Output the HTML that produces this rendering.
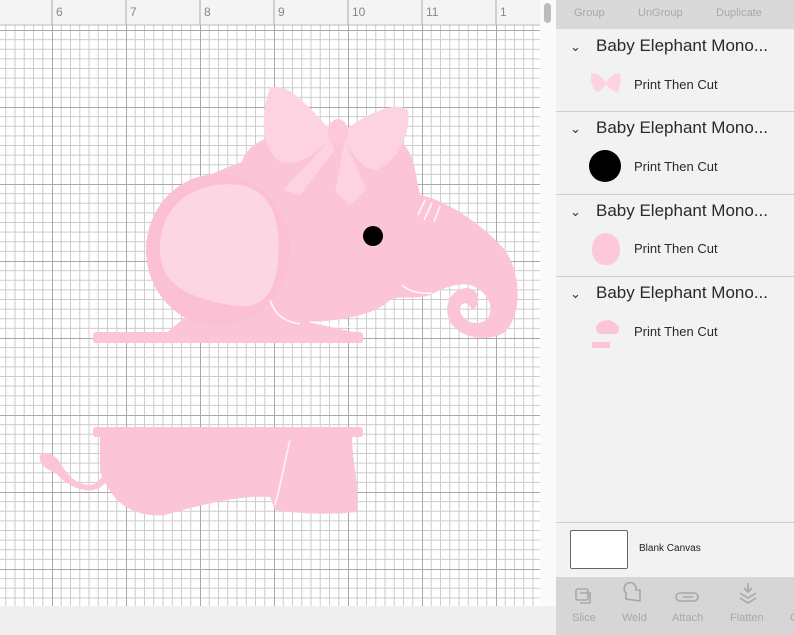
<!DOCTYPE html>
<html><head><meta charset="utf-8"><style>
*{margin:0;padding:0;box-sizing:border-box}
body{width:794px;height:635px;overflow:hidden;background:#f2f2f2;font-family:"Liberation Sans",sans-serif;position:relative}
.abs{position:absolute}
.hdr{position:absolute;left:570px;font-size:17px;color:#2a2a2a;width:224px;white-space:nowrap}
.hdr span{display:inline-block;width:26px;font-size:13px;color:#333}
.ptc{position:absolute;left:634px;font-size:13px;color:#2a2a2a}
.sep{position:absolute;left:556px;width:238px;height:1px;background:#cfcfcf}
.tb{position:absolute;font-size:11px;color:#a8a8a8}
</style></head><body>
<svg class="abs" style="left:0;top:0" width="556" height="635">
<defs>
<pattern id="g" patternUnits="userSpaceOnUse" x="52" y="30" width="74" height="77">
<rect width="74" height="77" fill="#fff"/>
<g stroke="#cdcdcd" stroke-width="1">
<line x1="9.25" y1="0" x2="9.25" y2="77"/><line x1="18.5" y1="0" x2="18.5" y2="77"/><line x1="27.75" y1="0" x2="27.75" y2="77"/><line x1="37" y1="0" x2="37" y2="77"/><line x1="46.25" y1="0" x2="46.25" y2="77"/><line x1="55.5" y1="0" x2="55.5" y2="77"/><line x1="64.75" y1="0" x2="64.75" y2="77"/>
<line y1="9.6" x1="0" y2="9.6" x2="74"/><line y1="19.25" x1="0" y2="19.25" x2="74"/><line y1="28.9" x1="0" y2="28.9" x2="74"/><line y1="38.5" x1="0" y2="38.5" x2="74"/><line y1="48.1" x1="0" y2="48.1" x2="74"/><line y1="57.75" x1="0" y2="57.75" x2="74"/><line y1="67.4" x1="0" y2="67.4" x2="74"/>
</g>
<g stroke="#a9a9a9" stroke-width="1"><line x1="0.5" y1="0" x2="0.5" y2="77"/><line y1="0.5" x1="0" y2="0.5" x2="74"/></g>
</pattern>
</defs>
<rect x="0" y="0" width="540" height="606" fill="url(#g)"/>
<rect x="0" y="606" width="556" height="29" fill="#efefef"/>
<rect x="0" y="0" width="540" height="25" fill="#f4f4f4"/>
<line x1="0" y1="25" x2="540" y2="25" stroke="#bbb"/>
<g stroke="#aaa">
<line x1="52" y1="0" x2="52" y2="25"/><line x1="126" y1="0" x2="126" y2="25"/><line x1="200" y1="0" x2="200" y2="25"/><line x1="274" y1="0" x2="274" y2="25"/><line x1="348" y1="0" x2="348" y2="25"/><line x1="422" y1="0" x2="422" y2="25"/><line x1="496" y1="0" x2="496" y2="25"/>
</g>
<g fill="#888" font-size="12" font-family="Liberation Sans"><text x="56" y="16">6</text><text x="130" y="16">7</text><text x="204" y="16">8</text><text x="278" y="16">9</text><text x="352" y="16">10</text><text x="426" y="16">11</text><text x="500" y="16">1</text></g>
<rect x="540" y="0" width="16" height="606" fill="#fafafa"/>
<rect x="544" y="3" width="7" height="20" rx="3.5" fill="#bcbcbc"/>
<g fill="#fcc5d7">
<rect x="93" y="332" width="270" height="11" rx="3"/>
<path d="M165 334 L200 305 L290 305 L300 320 L362 334 Z"/>
<path d="M242 162 C248 135 300 125 350 128 C392 130 410 140 415 170 L420 195 C445 200 480 222 505 250 C522 275 522 315 505 332 C490 342 462 340 450 322 C442 305 452 287 468 288 C480 290 482 305 472 310 C468 300 460 302 460 310 C462 322 478 328 488 318 C495 305 486 290 470 285 C455 282 440 290 430 295 C415 300 400 295 390 300 C375 315 340 322 300 322 L230 318 C200 315 160 300 150 270 C145 240 160 200 200 180 C215 172 230 166 242 162 Z"/>
</g>
<ellipse cx="218" cy="250" rx="72" ry="76" fill="#fbc0d4"/>
<path d="M160 250 C160 200 200 180 240 185 C270 190 282 220 278 260 C274 300 258 310 230 305 C190 298 160 285 160 250 Z" fill="#fdd6e3"/>
<g fill="none" stroke="#fff" stroke-width="1.6" opacity="0.85">
<path d="M270 300 C275 315 285 322 300 324"/><path d="M310 322 L355 328"/>
<path d="M402 285 C410 292 420 294 432 293"/>
<path d="M425 200 L418 215 M432 203 L424 220 M440 206 L434 222"/>
</g>
<g fill="#fdd3e1">
<path d="M332 132 C312 110 287 80 270 88 C262 110 258 145 280 162 C300 167 318 152 332 137 Z"/>
<path d="M345 130 C365 115 395 100 408 110 C412 135 395 165 375 170 C360 168 350 150 345 140 Z"/>
<path d="M330 140 L283 190 L300 195 L335 150 Z"/>
<path d="M345 140 L335 192 L350 205 L366 190 Z"/>
<ellipse cx="338" cy="132" rx="10" ry="13" fill="#fcc8da"/>
</g>
<circle cx="373" cy="236" r="10" fill="#000"/>
<g fill="#fcc5d7">
<rect x="93" y="427" width="270" height="10" rx="3"/>
<path d="M100 436 L352 436 C352 460 360 490 357 512 C330 515 300 514 275 510 L270 497 C240 495 200 505 165 515 C130 518 110 500 100 470 Z"/>
<path d="M40 455 C45 450 55 455 60 462 C65 472 75 485 90 485 C98 484 102 478 104 470 L108 476 C106 486 96 492 85 490 C70 488 60 478 55 472 C45 470 38 462 40 455 Z"/>
</g>
<path d="M290 440 C285 460 282 480 275 505" stroke="#fff" stroke-width="1.5" fill="none" opacity="0.8"/>
</svg>
<div class="abs" style="left:556px;top:0;width:238px;height:29px;background:#d9d9d9"></div>
<div class="tb" style="left:574px;top:7px">Group</div>
<div class="tb" style="left:638px;top:7px">UnGroup</div>
<div class="tb" style="left:716px;top:7px">Duplicate</div>
<div class="hdr" style="top:36px"><span>⌄</span>Baby Elephant Mono...</div>
<svg class="abs" style="left:590px;top:70px" width="32" height="28"><path d="M16 12 C10 4 4 2 1 4 C0 12 3 20 8 22 C12 20 15 16 16 14 C18 18 24 22 28 22 C31 16 31 6 30 4 C26 2 20 6 16 12 Z" fill="#fdd3e1"/></svg>
<div class="ptc" style="top:77px">Print Then Cut</div>
<div class="sep" style="top:111px"></div>
<div class="hdr" style="top:118px"><span>⌄</span>Baby Elephant Mono...</div>
<div class="abs" style="left:589px;top:150px;width:32px;height:32px;border-radius:50%;background:#000"></div>
<div class="ptc" style="top:159px">Print Then Cut</div>
<div class="sep" style="top:194px"></div>
<div class="hdr" style="top:201px"><span>⌄</span>Baby Elephant Mono...</div>
<div class="abs" style="left:592px;top:233px;width:28px;height:32px;border-radius:50% 50% 45% 45%;background:#fcc8da"></div>
<div class="ptc" style="top:241px">Print Then Cut</div>
<div class="sep" style="top:276px"></div>
<div class="hdr" style="top:283px"><span>⌄</span>Baby Elephant Mono...</div>
<svg class="abs" style="left:590px;top:318px" width="36" height="32"><path d="M8 6 C12 1 22 1 26 6 C30 8 30 14 26 16 L10 16 C5 14 5 9 8 6 Z M2 24 L20 24 L20 30 L2 30 Z" fill="#fcc5d7"/></svg>
<div class="ptc" style="top:324px">Print Then Cut</div>
<div class="sep" style="top:522px"></div>
<div class="abs" style="left:570px;top:530px;width:58px;height:39px;background:#fff;border:1px solid #666;border-radius:2px"></div>
<div class="abs" style="left:639px;top:543px;font-size:10px;color:#222">Blank Canvas</div>
<div class="abs" style="left:556px;top:577px;width:238px;height:58px;background:#d6d6d6"></div>
<svg class="abs" style="left:556px;top:577px" width="238" height="58" fill="none" stroke="#a8a8a8" stroke-width="1.6">
<rect x="20" y="12" width="12" height="11" rx="2"/><path d="M24 16 h10 v10 h-10"/>
<path d="M70 22 v-6 a6 6 0 1 1 10 -3 h4 v11 z"/>
<path d="M124 16 h14 a4 4 0 0 1 0 8 h-14 a4 4 0 0 1 0 -8 M127 20 h10"/>
<path d="M192 6 v8 M188 11 l4 4 l4 -4 M184 16 l8 5 l8 -5 M184 21 l8 5 l8 -5"/>
</svg>
<div class="tb" style="left:572px;top:612px">Slice</div>
<div class="tb" style="left:622px;top:612px">Weld</div>
<div class="tb" style="left:672px;top:612px">Attach</div>
<div class="tb" style="left:730px;top:612px">Flatten</div>
<div class="tb" style="left:790px;top:612px">C</div>
</body></html>
